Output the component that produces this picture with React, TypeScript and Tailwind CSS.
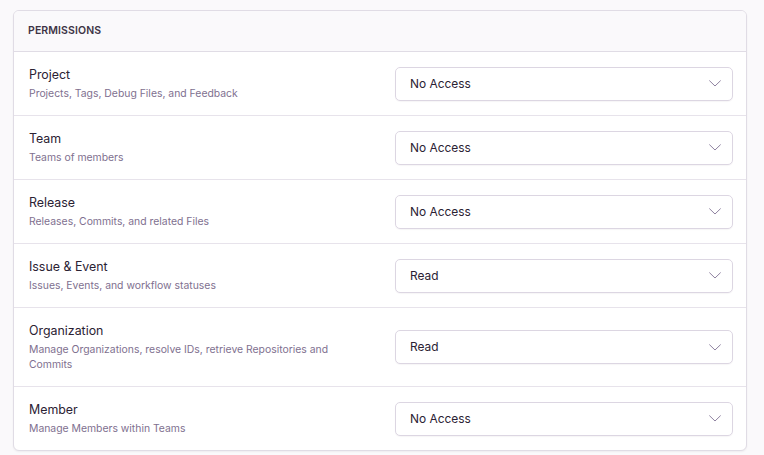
type Permission = {
  name: string;
  description: string;
  value: string;
};

const permissions: Permission[] = [
  { name: "Project", description: "Projects, Tags, Debug Files, and Feedback", value: "No Access" },
  { name: "Team", description: "Teams of members", value: "No Access" },
  { name: "Release", description: "Releases, Commits, and related Files", value: "No Access" },
  { name: "Issue & Event", description: "Issues, Events, and workflow statuses", value: "Read" },
  {
    name: "Organization",
    description: "Manage Organizations, resolve IDs, retrieve Repositories and Commits",
    value: "Read",
  },
  { name: "Member", description: "Manage Members within Teams", value: "No Access" },
];

function Chevron() {
  return (
    <svg width="12" height="7" viewBox="0 0 12 7" fill="none" className="text-[#8f82a0]">
      <path d="M0.6 0.8 L6 6 L11.4 0.8" stroke="currentColor" strokeWidth="1" strokeLinecap="round" strokeLinejoin="round" />
    </svg>
  );
}

function PermissionRow({ permission, last }: { permission: Permission; last: boolean }) {
  return (
    <div className={"grid grid-cols-2 items-center py-[14px] " + (last ? "" : "border-b border-[#e7e3eb]")}>
      <div className="pl-[15px] pr-4">
        <div className="text-[12.4px] leading-[17px] text-[#2b2233]">{permission.name}</div>
        <div className="mt-[3px] text-[10.4px] leading-[15px] text-[#80708f]">{permission.description}</div>
      </div>
      <div className="pl-[15px] pr-[13px]">
        <button
          type="button"
          className="flex h-[34px] w-full items-center justify-between rounded-[5px] border border-[#dcd6e2] bg-white pl-[14px] pr-[11px] text-left text-[11.9px] text-[#2b2233] shadow-[0_1px_1px_rgba(43,34,51,0.04)]"
        >
          <span>{permission.value}</span>
          <Chevron />
        </button>
      </div>
    </div>
  );
}

export default function App() {
  return (
    <div
      className="min-h-screen bg-[#faf9fb] pl-[13px] pr-[17px] pt-[10px]"
      style={{ fontFamily: "Inter, 'Noto Sans', sans-serif" }}
    >
      <div className="overflow-hidden rounded-[6px] border border-[#e0dce5] bg-white shadow-[0_1px_2px_rgba(43,34,51,0.06)]">
        <div className="flex h-[41px] items-center border-b border-[#e0dce5] bg-[#faf9fb] px-[14px]">
          <h3 className="text-[10.5px] font-semibold uppercase tracking-[0.01em] text-[#3e3446]">Permissions</h3>
        </div>
        {permissions.map((p, i) => (
          <PermissionRow key={p.name} permission={p} last={i === permissions.length - 1} />
        ))}
      </div>
    </div>
  );
}
